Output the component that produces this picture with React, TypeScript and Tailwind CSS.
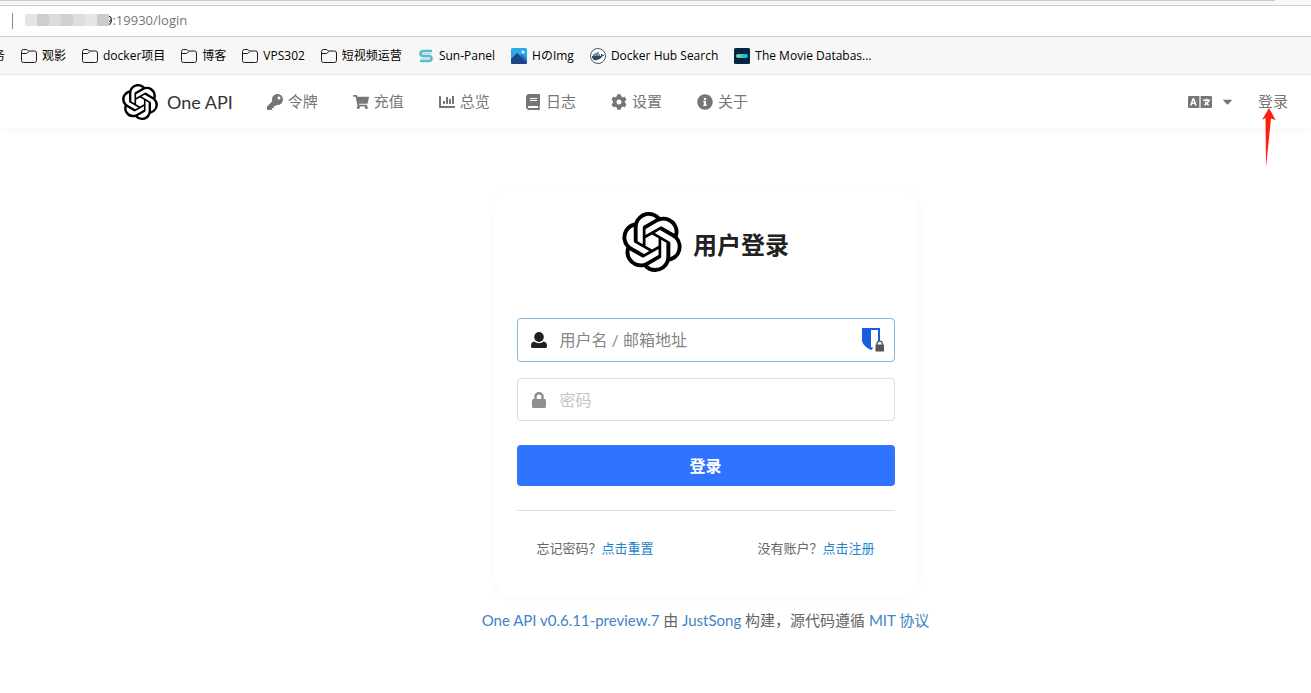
import type { ReactNode } from "react";
import {
  FaBook,
  FaCaretDown,
  FaChartBar,
  FaCog,
  FaDocker,
  FaInfoCircle,
  FaKey,
  FaLanguage,
  FaLock,
  FaShoppingCart,
} from "react-icons/fa";
import { SiOpenai } from "react-icons/si";

function FolderIcon() {
  return (
    <svg width="16" height="14" viewBox="0 0 16 14" fill="none" stroke="#1b1b1b">
      <path d="M.5 2.5a2 2 0 0 1 2-2h2.7c.5 0 .9.2 1.2.5l1 1h6.1a2 2 0 0 1 2 2v7.5a2 2 0 0 1-2 2h-11a2 2 0 0 1-2-2zM.5 4.5h4.7c.5 0 .9-.2 1.2-.5l1.500-1.500" />
    </svg>
  );
}

function SunPanelIcon() {
  return (
    <svg width="16" height="16" viewBox="0 0 16 16" fill="none">
      <path d="M14 3H5a2.500 2.500 0 0 0 0 5h6a2.500 2.500 0 0 1 0 5H2" stroke="#55bccb" strokeWidth="2.600" />
      <path d="M4 5.700h9M3 10.400h8" stroke="#8fd3dc" strokeWidth=".8" />
    </svg>
  );
}

function ImgIcon() {
  return (
    <svg width="16" height="16" viewBox="0 0 16 16">
      <rect width="16" height="16" rx="1.500" fill="#29a9e8" />
      <path d="M0 11 6 5l10 9v.500a1.500 1.500 0 0 1-1.500 1.500h-13A1.500 1.500 0 0 1 0 14.500z" fill="#1b4686" />
      <path d="m9 8 2-2 5 5v3.500z" fill="#2f6bd0" />
      <circle cx="12" cy="4" r="1.500" fill="#e5f6ff" />
    </svg>
  );
}

function DockerIcon() {
  return (
    <span className="flex size-4 items-center justify-center rounded-full border border-[#3f5a70] bg-white">
      <FaDocker className="size-3 text-[#2f4a60]" />
    </span>
  );
}

function MovieIcon() {
  return (
    <svg width="16" height="16" viewBox="0 0 16 16">
      <defs>
        <linearGradient id="tmdb">
          <stop stopColor="#90cea1" />
          <stop offset="1" stopColor="#01b4e4" />
        </linearGradient>
      </defs>
      <rect width="16" height="16" rx="1.500" fill="#032541" />
      <rect x="2" y="6" width="12" height="4" rx="2" fill="url(#tmdb)" />
    </svg>
  );
}

function UserIcon() {
  return (
    <svg width="16" height="16" viewBox="0 0 16 16" fill="#212121" aria-hidden="true">
      <ellipse cx="8" cy="5" rx="4.800" ry="5" />
      <path d="M3.400 9.600C4.600 10.800 6.200 11.300 8 11.300s3.400-.5 4.600-1.700C14.800 9.800 16 11.500 16 13.700v.800c0 .8-.7 1.500-1.500 1.500h-13C.7 16 0 15.300 0 14.500v-.8c0-2.200 1.200-3.900 3.400-4.100z" />
    </svg>
  );
}

function BitwardenIcon() {
  return (
    <svg width="24" height="26" viewBox="0 0 24 26" aria-hidden="true">
      <path d="M1 1h18v13H17V3h-7v17.500l1.500-.8V22L10 23C5 20.500 1 17 1 13z" fill="#175ddc" />
      <path d="M14.500 17.500h8.500v7h-8.500z" fill="#555" />
      <path d="M16 18v-1.200a2.700 2.700 0 0 1 5.400 0V18" fill="none" stroke="#555" strokeWidth="1.300" />
    </svg>
  );
}

const BOOKMARKS: { label: string; icon: ReactNode }[] = [
  { label: "观影", icon: <FolderIcon /> },
  { label: "docker项目", icon: <FolderIcon /> },
  { label: "博客", icon: <FolderIcon /> },
  { label: "VPS302", icon: <FolderIcon /> },
  { label: "短视频运营", icon: <FolderIcon /> },
  { label: "Sun-Panel", icon: <SunPanelIcon /> },
  { label: "HのImg", icon: <ImgIcon /> },
  { label: "Docker Hub Search", icon: <DockerIcon /> },
  { label: "The Movie Databas...", icon: <MovieIcon /> },
];

const NAV = [
  { label: "令牌", Icon: FaKey },
  { label: "充值", Icon: FaShoppingCart },
  { label: "总览", Icon: FaChartBar },
  { label: "日志", Icon: FaBook },
  { label: "设置", Icon: FaCog },
  { label: "关于", Icon: FaInfoCircle },
];

// Blocks that hide the host name in the address bar.
const MASK = ["bg-[#e6e4e4]", "bg-[#cfcdce]", "bg-[#dcdadb]", "bg-[#d3d1d0]", "bg-[#dcdee0]", "bg-[#e6e6e6]", "bg-[#cdcbcb]"];

function BrowserBar() {
  return (
    <div className="bg-[#f7f7f7] font-['Open_Sans','Noto_Sans_CJK_SC',sans-serif]">
      <div className="mr-9 h-px bg-[#cbcbcb]" />
      <div className="mt-1 flex h-8 items-center border-y border-[#cdcdcd] bg-white text-[13px] text-[#767676]">
        <span className="h-4 w-[13px] border-r border-[#8a8a8a]" />
        <span className="z-10 ml-3 flex pb-0.5">
          {MASK.map((c) => (
            <span key={c} className={`h-3 w-3 ${c}`} />
          ))}
        </span>
        <span className="-ml-1 text-black">9</span>
        <span>:19930/login</span>
      </div>
      <div className="flex h-[38px] items-center gap-4 overflow-hidden border-b border-[#e8e8e8] text-xs whitespace-nowrap text-black">
        <span className="-ml-[7px]">务</span>
        {BOOKMARKS.map((b) => (
          <a key={b.label} href="#" className="flex items-center gap-[5px]">
            {b.icon}
            <span className="pt-px">{b.label}</span>
          </a>
        ))}
      </div>
    </div>
  );
}

function Arrow() {
  return (
    <svg className="absolute top-[18px] left-1 z-10" width="14" height="60" viewBox="0 0 14 60" aria-hidden="true">
      <path d="M7 0 13.500 12 9 10.500 4 59 3.500 10 0 12z" fill="#ff1d0d" />
    </svg>
  );
}

function Header() {
  return (
    <header className="flex h-[53px] items-center pr-[23px] pl-[122px] text-[15px] text-[#767676] shadow-[0_2px_8px_rgba(0,0,0,0.04)]">
      <a href="#" className="mr-[33px] flex items-center gap-[9px] text-lg text-[#333]">
        <SiOpenai className="size-9 text-black" />
        One API
      </a>
      <nav className="flex gap-[34px]">
        {NAV.map(({ label, Icon }) => (
          <a key={label} href="#" className="flex items-center gap-1">
            <span className="flex w-[18px] justify-center">
              <Icon className="size-4" />
            </span>
            {label}
          </a>
        ))}
      </nav>
      <button aria-label="语言" className="ml-auto flex items-center gap-2">
        <FaLanguage className="size-6" />
        <FaCaretDown />
      </button>
      <a href="#" className="relative ml-[23px]">
        登录
        <Arrow />
      </a>
    </header>
  );
}

function LoginCard() {
  return (
    <form className="w-[422px] rounded-2xl bg-white px-[22px] pt-[22px] pb-[38px] shadow-[0_1px_12px_rgba(0,0,0,0.04)]">
      <h2 className="flex items-center justify-center gap-[11px] text-2xl font-bold text-[#212121]">
        <SiOpenai className="size-15 text-black" />
        <span className="pt-1.5">用户登录</span>
      </h2>
      <label className="mt-[46px] flex h-11 items-center rounded border border-[#85b7d9] pr-[9px] pl-[13px]">
        <UserIcon />
        <input
          aria-label="用户名 / 邮箱地址"
          placeholder="用户名 / 邮箱地址"
          className="ml-[13px] min-w-0 flex-1 text-base outline-none placeholder:text-[#858585]"
        />
        <BitwardenIcon />
      </label>
      <label className="mt-4 flex h-[43px] items-center rounded border border-[#dedede] pr-[9px] pl-[13px]">
        <FaLock className="size-4 text-[#909090]" />
        <input
          type="password"
          aria-label="密码"
          placeholder="密码"
          className="ml-[13px] min-w-0 flex-1 text-base outline-none placeholder:text-[#c4c4c4]"
        />
      </label>
      <button type="button" className="mt-6 h-[41px] w-full rounded bg-[#2f73ff] text-base font-bold text-white">
        登录
      </button>
      <hr className="mt-6 border-[#dedede]" />
      <div className="mt-[27px] flex justify-between px-5 text-[13px] leading-5 text-[#666]">
        <div>
          忘记密码？
          <a href="#" className="text-[#2185d0]">点击重置</a>
        </div>
        <div>
          没有账户？
          <a href="#" className="text-[#2185d0]">点击注册</a>
        </div>
      </div>
    </form>
  );
}

export default function App() {
  return (
    <div className="min-h-screen bg-white font-['Lato','Noto_Sans_CJK_SC',sans-serif]">
      <BrowserBar />
      <Header />
      <main className="flex flex-col items-center pt-[62px] pl-[100px]">
        <LoginCard />
        <footer className="mt-[13px] text-[15px] text-[#666]">
          <a href="#" className="text-[#4183c4]">One API v0.6.11-preview.7</a> 由{" "}
          <a href="#" className="text-[#4183c4]">JustSong</a> 构建，源代码遵循{" "}
          <a href="#" className="text-[#4183c4]">MIT 协议</a>
        </footer>
      </main>
    </div>
  );
}
